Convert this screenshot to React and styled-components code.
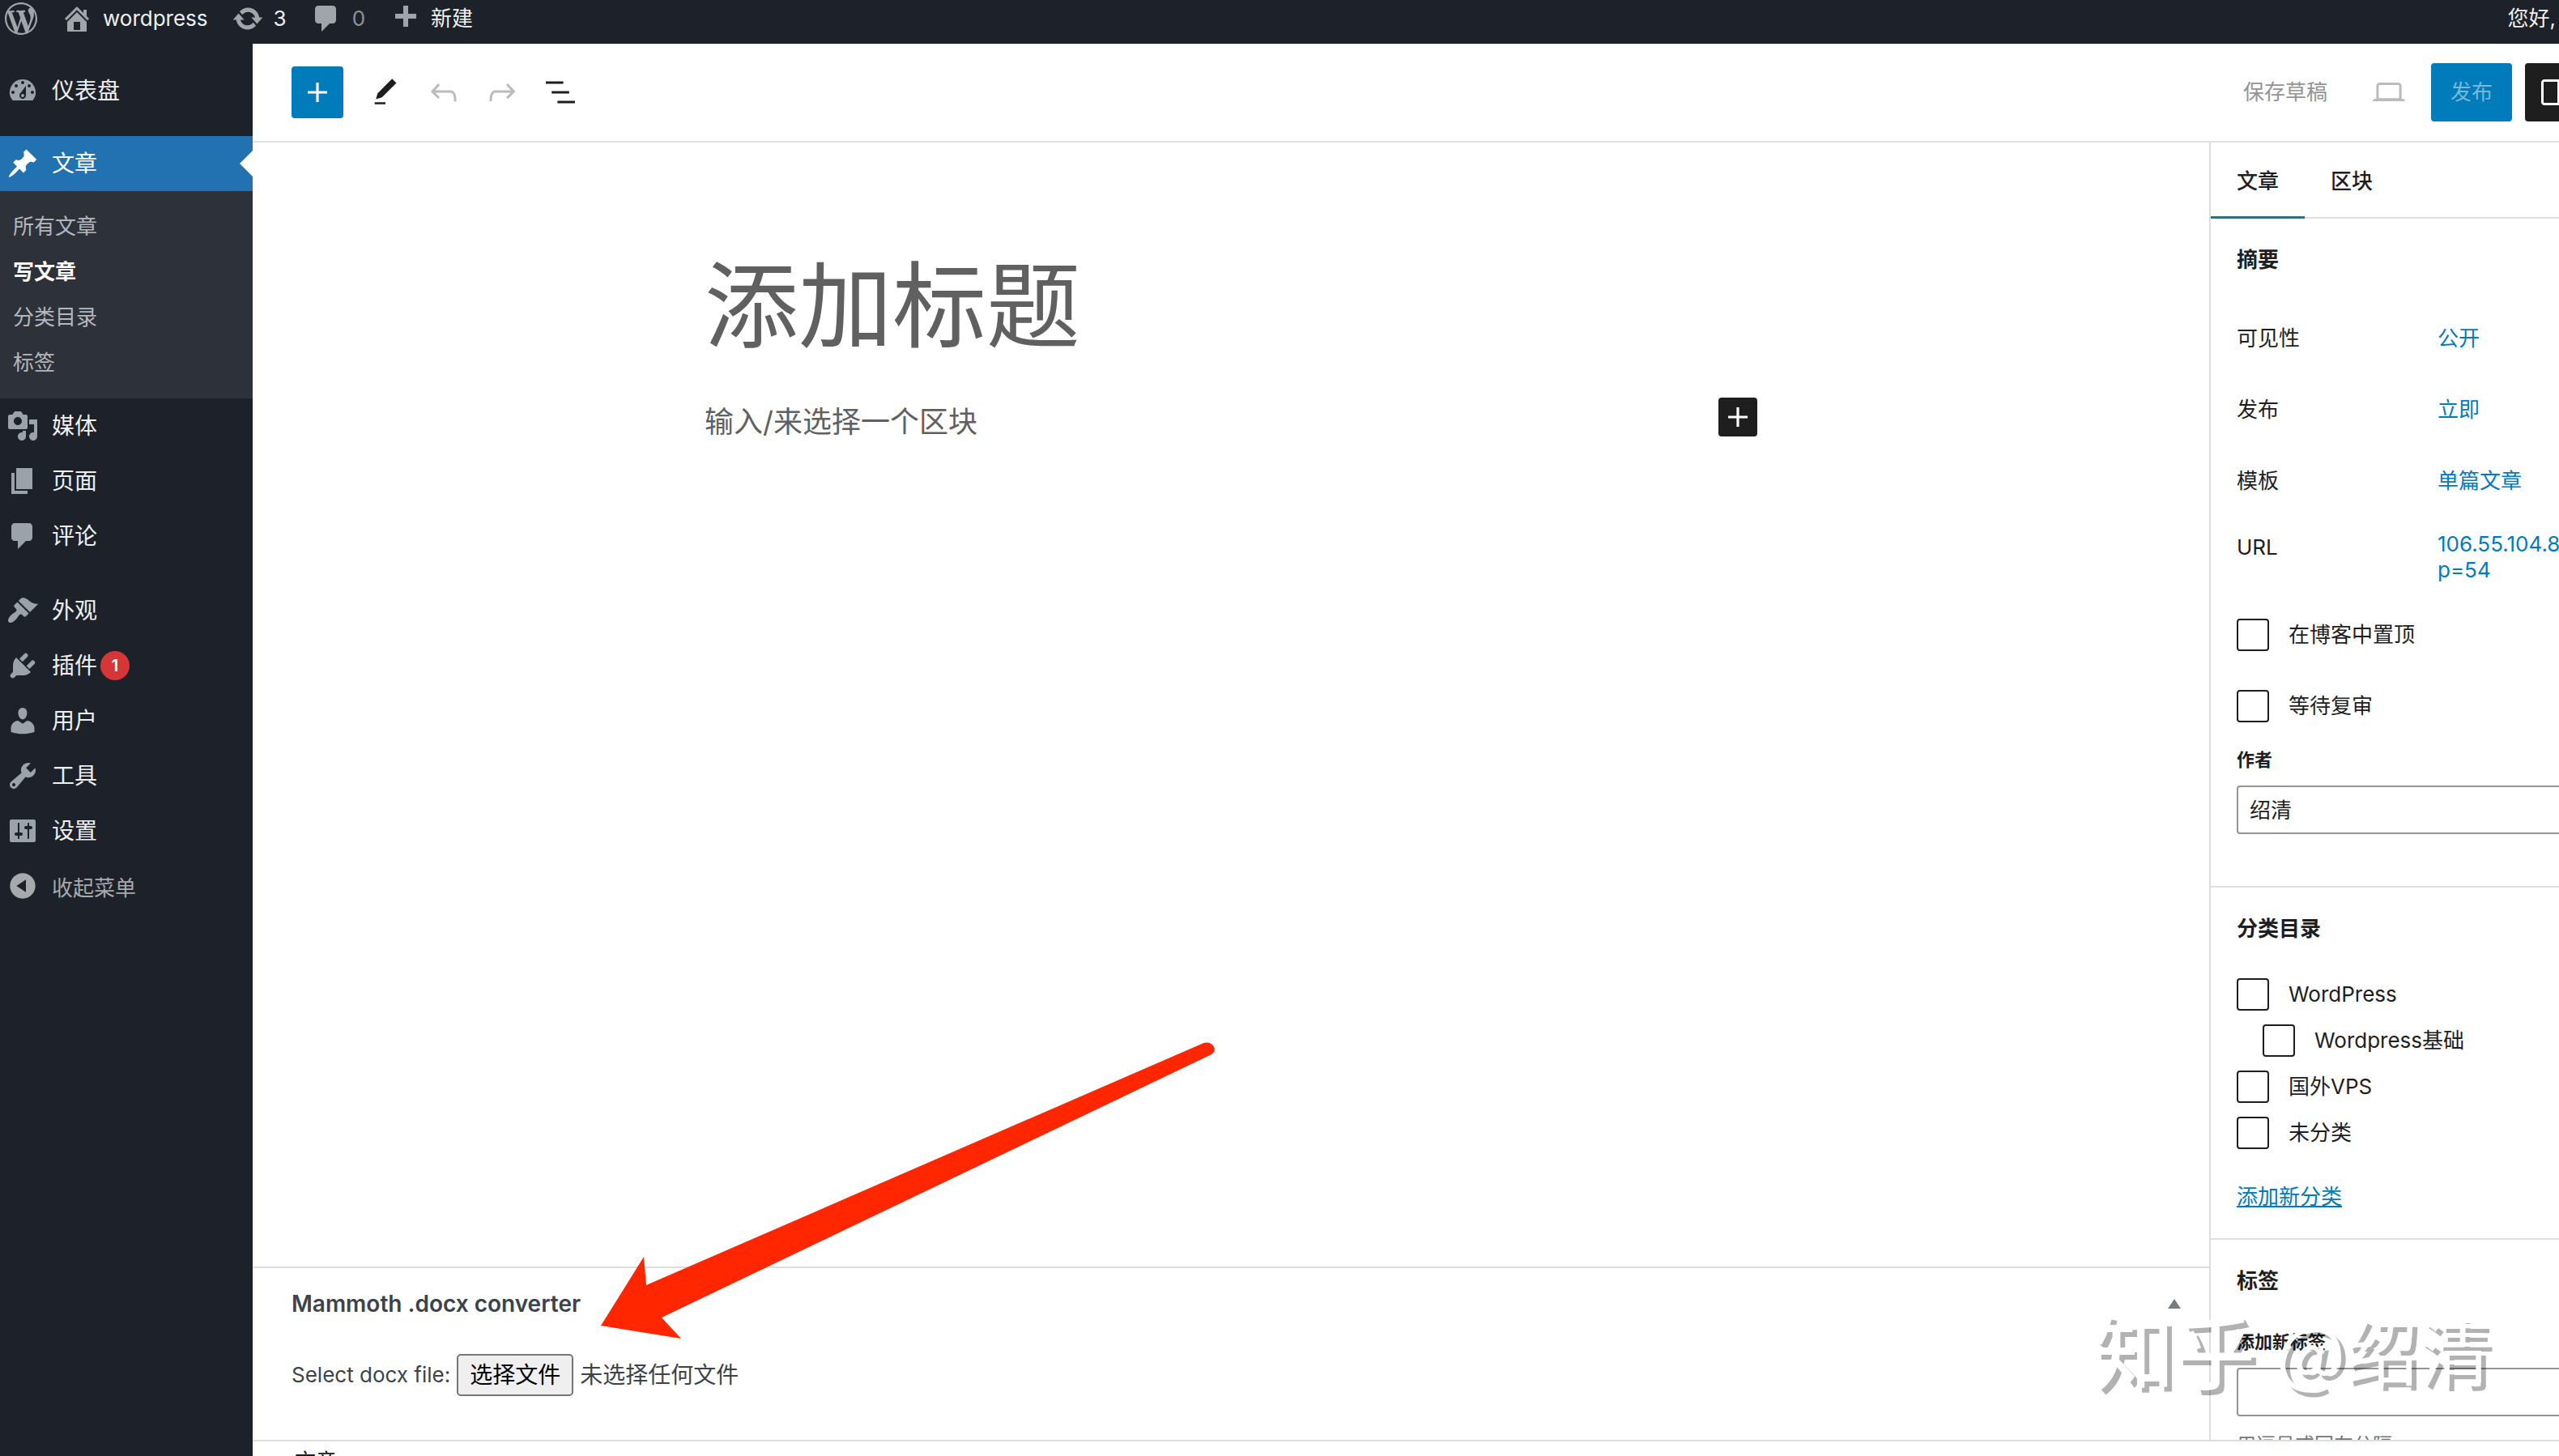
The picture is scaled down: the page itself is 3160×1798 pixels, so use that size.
import React from 'react';
import styled, { createGlobalStyle, css } from 'styled-components';

const GlobalStyle = createGlobalStyle`
    * {
        box-sizing: border-box;
    }
    body {
        margin: 0;
        overflow: hidden;
        background: #ffffff;
        color: #1e1e1e;
        font-family: Inter, "Noto Sans CJK SC", sans-serif;
        font-size: 26px;
    }
    h1, h2, h3, p, ul, dl, dd {
        margin: 0;
        padding: 0;
        font-weight: 400;
    }
    ul {
        list-style: none;
    }
    a {
        color: inherit;
        text-decoration: none;
    }
    button, input, select {
        margin: 0;
        font: inherit;
        color: inherit;
    }
    button {
        padding: 0;
        border: 0;
        background: none;
        cursor: pointer;
    }
`;

/* ---------- icons ---------- */

const dashicons = {
    wordpress: 'M20 10c0-5.51-4.49-10-10-10C4.48 0 0 4.49 0 10c0 5.52 4.48 10 10 10 5.51 0 10-4.48 10-10zM7.78 15.37L4.37 6.22c.55-.02 1.17-.08 1.17-.08.5-.06.44-1.13-.06-1.11 0 0-1.45.11-2.37.11-.18 0-.37 0-.58-.01C4.12 2.69 6.87 1.11 10 1.11c2.33 0 4.45.87 6.05 2.34-.68-.11-1.65.39-1.65 1.58 0 .74.45 1.36.9 2.1.35.61.55 1.36.55 2.46 0 1.49-1.4 5-1.4 5l-3.03-8.37c.54-.02.82-.17.82-.17.5-.05.44-1.25-.06-1.22 0 0-1.44.12-2.38.12-.87 0-2.33-.12-2.33-.12-.5-.03-.56 1.2-.06 1.22l.92.08 1.26 3.41zM17.41 10c.24-.64.74-1.87.43-4.25.7 1.29 1.05 2.71 1.05 4.25 0 3.29-1.73 6.24-4.4 7.78.97-2.59 1.94-5.2 2.92-7.78zM6.1 18.09C3.12 16.65 1.11 13.53 1.11 10c0-1.3.23-2.48.72-3.59C3.25 10.3 4.67 14.2 6.1 18.09zm4.03-6.63l2.58 6.98c-.86.29-1.76.45-2.71.45-.79 0-1.57-.11-2.29-.33.81-2.38 1.62-4.74 2.42-7.1z',
    home: 'M16 8.5l1.53 1.53-1.06 1.06L10 4.6l-6.47 6.49-1.06-1.06L10 2.5l4 4v-2h2v4zm-6-2.46l6 5.99V18H4v-5.97zM12 17v-5H8v5h4z',
    update: 'M10.2 3.28c3.53 0 6.43 2.61 6.92 6h2.08l-3.5 4-3.5-4h2.32c-.45-1.97-2.21-3.45-4.32-3.45-1.45 0-2.73.71-3.54 1.78L4.95 5.66C6.23 4.2 8.11 3.28 10.2 3.28zm-.4 13.44c-3.52 0-6.43-2.61-6.92-6H.8l3.5-4c1.17 1.33 2.33 2.67 3.5 4H5.48c.45 1.97 2.21 3.45 4.32 3.45 1.45 0 2.73-.71 3.54-1.78l1.71 1.95c-1.28 1.46-3.15 2.38-5.25 2.38z',
    comments: 'M5 2h9c1.1 0 2 .9 2 2v7c0 1.1-.9 2-2 2h-2l-5 5v-5H5c-1.1 0-2-.9-2-2V4c0-1.1.9-2 2-2z',
    plus: 'M17 7v3h-5v5H9v-5H4V7h5V2h3v5h5z',
    dashboard: 'M3.76 16h12.48A7.998 7.998 0 0 0 10 3a7.998 7.998 0 0 0-6.24 13zM10 4c.55 0 1 .45 1 1s-.45 1-1 1-1-.45-1-1 .45-1 1-1zM6 6c.55 0 1 .45 1 1s-.45 1-1 1-1-.45-1-1 .45-1 1-1zm8 0c.55 0 1 .45 1 1s-.45 1-1 1-1-.45-1-1 .45-1 1-1zm-5.37 5.55L12 7v6c0 1.1-.9 2-2 2s-2-.9-2-2c0-.57.24-1.08.63-1.45zM4 10c.55 0 1 .45 1 1s-.45 1-1 1-1-.45-1-1 .45-1 1-1zm12 0c.55 0 1 .45 1 1s-.45 1-1 1-1-.45-1-1 .45-1 1-1zm-5 3c0-.55-.45-1-1-1s-1 .45-1 1 .45 1 1 1 1-.45 1-1z',
    post: 'M10.44 3.02l1.82-1.82 6.36 6.35-1.83 1.82c-1.05-.68-2.48-.57-3.41.36l-.75.75c-.92.93-1.04 2.35-.35 3.41l-1.83 1.82-2.41-2.41-2.8 2.79c-.42.42-3.38 2.71-3.8 2.29s1.86-3.39 2.28-3.81l2.79-2.79L4.1 9.36l1.83-1.82c1.05.69 2.48.57 3.4-.36l.75-.75c.93-.92 1.05-2.35.36-3.41z',
    media: 'M13 11V4c0-.55-.45-1-1-1h-1.67L9 1H5L3.67 3H2c-.55 0-1 .45-1 1v7c0 .55.45 1 1 1h10c.55 0 1-.45 1-1zM7 4.5c1.38 0 2.5 1.12 2.5 2.5S8.38 9.5 7 9.5 4.5 8.38 4.5 7 5.62 4.5 7 4.5zM14 6h5v10.5c0 1.38-1.12 2.5-2.5 2.5S14 17.88 14 16.5s1.12-2.5 2.5-2.5c.17 0 .34.02.5.05V9h-3V6zm-4 8.05V13h2v3.5c0 1.38-1.12 2.5-2.5 2.5S7 17.88 7 16.5 8.12 14 9.5 14c.17 0 .34.02.5.05z',
    page: 'M6 15V2h10v13H6zm-1 1h8v2H3V5h2v11z',
    appearance: 'M14.48 11.06L7.41 3.99l1.5-1.5c.5-.56 2.3-.47 3.51.32 1.21.8 1.43 1.28 2.91 2.1 1.18.64 2.45 1.26 4.45.85zm-.71.71L6.7 4.7 4.93 6.47c-.39.39-.39 1.02 0 1.41l1.06 1.06c.39.39.39 1.03 0 1.42-.6.6-1.43 1.11-2.21 1.69-.35.26-.7.53-1.01.84C1.43 14.23.4 16.08 1.4 17.07c.99 1 2.84-.03 4.18-1.36.31-.31.58-.66.85-1.02.57-.78 1.08-1.61 1.69-2.21.39-.39 1.02-.39 1.41 0l1.06 1.06c.39.39 1.02.39 1.41 0z',
    plugins: 'M13.11 4.36L9.87 7.6 8 5.73l3.24-3.24c.35-.34 1.05-.2 1.56.32.52.51.66 1.21.31 1.55zm-8 1.77l.91-1.12 9.01 9.01-1.19.84c-.71.71-2.63 1.16-3.82 1.16H6.14L4.9 17.26c-.59.59-1.54.59-2.12 0-.59-.58-.59-1.53 0-2.12l1.24-1.24v-3.88c0-1.13.4-3.19 1.09-3.89zm7.26 3.97l3.24-3.24c.34-.35 1.04-.21 1.55.31.52.51.66 1.21.31 1.55l-3.24 3.25z',
    users: 'M10 9.25c-2.27 0-2.73-3.44-2.73-3.44C7 4.02 7.82 2 9.97 2c2.16 0 2.98 2.02 2.71 3.81 0 0-.41 3.44-2.68 3.44zm0 2.57L12.72 10c2.39 0 4.52 2.33 4.52 4.53v2.49s-3.65 1.13-7.24 1.13c-3.65 0-7.24-1.13-7.24-1.13v-2.49c0-2.25 1.94-4.48 4.47-4.48z',
    tools: 'M16.68 9.77c-1.34 1.34-3.3 1.67-4.95.99l-5.41 6.52c-.99.99-2.59.99-3.58 0s-.99-2.59 0-3.57l6.52-5.42c-.68-1.65-.35-3.61.99-4.95 1.28-1.28 3.12-1.62 4.72-1.06l-2.89 2.89 2.82 2.82 2.86-2.87c.53 1.58.18 3.39-1.08 4.65zM3.81 16.21c.4.39 1.04.39 1.43 0 .4-.4.4-1.04 0-1.43-.39-.4-1.03-.4-1.43 0-.39.39-.39 1.03 0 1.43z',
    settings: 'M18 16V4c0-.55-.45-1-1-1H3c-.55 0-1 .45-1 1v12c0 .55.45 1 1 1h14c.55 0 1-.45 1-1zM8 11h1c.55 0 1 .45 1 1s-.45 1-1 1H8v1.5c0 .28-.22.5-.5.5s-.5-.22-.5-.5V13H6c-.55 0-1-.45-1-1s.45-1 1-1h1V5.5c0-.28.22-.5.5-.5s.5.22.5.5V11zm5-2h-1c-.55 0-1-.45-1-1s.45-1 1-1h1V5.5c0-.28.22-.5.5-.5s.5.22.5.5V7h1c.55 0 1 .45 1 1s-.45 1-1 1h-1v5.5c0 .28-.22.5-.5.5s-.5-.22-.5-.5V9z',
    collapse: 'M10 2.16c4.33 0 7.84 3.51 7.84 7.84s-3.51 7.84-7.84 7.84S2.16 14.33 2.16 10 5.71 2.16 10 2.16zm2 11.72V6.12L6.18 9.97z'
};

const editorIcons = {
    plus: 'M18 11.2h-5.2V6h-1.6v5.2H6v1.6h5.2V18h1.6v-5.2H18z',
    edit: 'M20.1 5.1L16.9 2 6.2 12.7l-1.3 4.4 4.5-1.3L20.1 5.1zM4 20.8h8v-1.5H4v1.5z',
    undo: 'M18.3 11.7c-.6-.6-1.4-.9-2.3-.9H6.7l2.9-3.3-1.1-1-4.5 5L8.5 16l1-1-2.7-2.7H16c.5 0 .9.2 1.3.5 1 1 1 3.4 1 4.5v.3h1.5v-.2c0-1.5 0-4.3-1.5-5.7z',
    redo: 'M15.6 6.5l-1.1 1 2.9 3.3H8c-.9 0-1.7.3-2.3.9-1.4 1.5-1.4 4.2-1.4 5.6v.2h1.5v-.3c0-1.1 0-3.5 1-4.5.3-.3.7-.5 1.3-.5h9.2L14.5 15l1.1 1.1 4.6-4.6-4.6-5z',
    listView: 'M13.8 5.2H3v1.5h10.8V5.2zm-3.6 12v1.5H21v-1.5H10.2zm7.2-6H6.6v1.5h10.8v-1.5z',
    desktop: 'M20.5 16h-.7V8c0-1.1-.9-2-2-2H6.2c-1.1 0-2 .9-2 2v8h-.7c-.8 0-1.5.7-1.5 1.5h20c0-.8-.7-1.5-1.5-1.5zM5.7 8c0-.3.2-.5.5-.5h11.6c.3 0 .5.2.5.5v7.6H5.7V8z',
    drawer: 'M18 4H6c-1.1 0-2 .9-2 2v12c0 1.1.9 2 2 2h12c1.1 0 2-.9 2-2V6c0-1.1-.9-2-2-2zm-4 14.5H6c-.3 0-.5-.2-.5-.5V6c0-.3.2-.5.5-.5h8v13zm4.5-.5c0 .3-.2.5-.5.5h-2.5v-13H18c.3 0 .5.2.5.5v12z'
};

const Svg = styled.svg`
    flex: none;
    width: ${props => props.$size}px;
    height: ${props => props.$size}px;
    fill: currentColor;
`;

const Dashicon = ({ name }) => (
    <Svg $size={40} viewBox="0 0 20 20" aria-hidden="true"><path d={dashicons[name]}/></Svg>
);

const EditorIcon = ({ name, size = 48 }) => (
    <Svg $size={size} viewBox="0 0 24 24" aria-hidden="true"><path d={editorIcons[name]}/></Svg>
);

/* ---------- page frame ---------- */

const Page = styled.div`
    position: relative;
    display: flex;
    flex-direction: column;
    height: 100vh;
    overflow: hidden;
`;

const Body = styled.div`
    display: flex;
    flex: 1;
    min-height: 0;
`;

/* ---------- admin bar ---------- */

const AdminBar = styled.header`
    display: flex;
    align-items: center;
    flex: none;
    gap: 29px;
    height: 54px;
    padding: 0 4px 9px 6px;
    background: #1d2129;
    color: #f0f0f1;
`;

const BarLink = styled.a`
    display: flex;
    align-items: center;
    gap: 12px;
    line-height: 44px;
    margin-left: ${props => (props.$end ? 'auto' : '0')};

    svg {
        color: #a0a5aa;
    }
`;

const Muted = styled.span`
    color: #8c9196;
`;

/* ---------- admin menu ---------- */

const Menu = styled.nav`
    flex: none;
    width: 312px;
    padding-top: 24px;
    background: #1d2129;
    color: #f0f0f1;
`;

const MenuLink = styled.a`
    position: relative;
    display: flex;
    align-items: center;
    gap: 16px;
    height: 68px;
    padding-left: 8px;
    font-size: 28px;
    line-height: 36px;

    svg {
        color: #9ca2a9;
    }

    ${props => props.$current && css`
        background: #2271b1;
        color: #ffffff;

        svg {
            color: #ffffff;
        }

        &::after {
            content: "";
            position: absolute;
            top: 18px;
            right: 0;
            border: 16px solid transparent;
            border-left: 0;
            border-right-color: #ffffff;
        }
    `}
`;

const Badge = styled.span`
    display: flex;
    align-items: center;
    justify-content: center;
    width: 36px;
    height: 36px;
    margin-left: -12px;
    border-radius: 50%;
    background: #d63638;
    color: #ffffff;
    font-size: 20px;
    font-weight: 600;
`;

const Separator = styled.li`
    height: ${props => props.$height}px;
`;

const SubMenu = styled.ul`
    padding: 16px;
    background: #2d313a;
`;

const SubLink = styled.a`
    display: block;
    line-height: 56px;
    color: ${props => (props.$current ? '#ffffff' : '#b4b7bd')};
    font-weight: ${props => (props.$current ? 700 : 400)};
`;

const CollapseButton = styled.button`
    display: flex;
    align-items: center;
    gap: 16px;
    height: 68px;
    padding-left: 8px;
    color: #a7aaad;
`;

/* ---------- editor ---------- */

/* the editor is wider than the window, its right edge is scrolled out of view */
const Editor = styled.div`
    display: flex;
    flex: 1;
    flex-direction: column;
    min-width: 0;
    margin-right: -128px;
`;

const EditorHeader = styled.div`
    display: flex;
    align-items: center;
    justify-content: space-between;
    flex: none;
    height: 122px;
    padding: 0 98px 0 48px;
    border-bottom: 2px solid #e0e0e0;
`;

const Tools = styled.div`
    display: flex;
    align-items: center;
    gap: ${props => props.$gap}px;
`;

const ToolButton = styled.button`
    display: flex;
    align-items: center;
    justify-content: center;
    width: 64px;
    height: 64px;
    border-radius: 4px;
    color: ${props => (props.disabled ? '#bbbbbb' : '#1e1e1e')};
`;

const InserterButton = styled(ToolButton)`
    margin-right: 12px;
    background: #007cba;
    color: #ffffff;
`;

const HeaderButton = styled(ToolButton)`
    width: 72px;
    height: 72px;
    ${props => props.$pressed && css`
        background: #1e1e1e;
        color: #ffffff;
    `}
`;

const SaveButton = styled.button`
    padding: 0 24px;
    line-height: 72px;
    color: #949494;
`;

const PublishButton = styled.button`
    padding: 0 24px;
    border-radius: 4px;
    background: #007cba;
    color: #78b9db;
    line-height: 72px;
`;

const Workspace = styled.div`
    display: grid;
    grid-template-columns: 1fr 560px;
    flex: 1;
    min-height: 0;
`;

const Content = styled.main`
    display: flex;
    flex-direction: column;
    min-width: 0;
`;

const Canvas = styled.div`
    flex: 1;
    width: 100%;
    max-width: 1300px;
    margin: 0 auto;
    padding-top: 132px;
    color: #606060;
`;

const PostTitle = styled.h1`
    font-size: 116px;
    line-height: 140px;
`;

const EmptyBlock = styled.div`
    display: flex;
    align-items: flex-start;
    justify-content: space-between;
    margin-top: 43px;
    font-size: 36px;
    line-height: 60px;
`;

const BlockInserter = styled(ToolButton)`
    width: 48px;
    height: 48px;
    background: #1e1e1e;
    color: #ffffff;
`;

const MetaBox = styled.section`
    padding: 24px 35px 54px 48px;
    border-top: 2px solid #dddddd;
    color: #3c434a;
`;

const MetaBoxHead = styled.div`
    display: flex;
    align-items: center;
    justify-content: space-between;
`;

const MetaBoxTitle = styled.h2`
    font-size: 28px;
    font-weight: 600;
    line-height: 40px;
`;

const ToggleButton = styled.button`
    border: 8px solid transparent;
    border-top: 0;
    border-bottom: 12px solid #787c82;
`;

const FileRow = styled.div`
    display: flex;
    align-items: center;
    gap: 8px;
    margin-top: 42px;
    line-height: 36px;
`;

const FileName = styled.span`
    font-size: 28px;
`;

const FileButton = styled.label`
    padding: 0 14px;
    border: 2px solid #767676;
    border-radius: 5px;
    background: #efefef;
    color: #000000;
    font-size: 28px;
    line-height: 48px;
`;

const HiddenFile = styled.input`
    position: absolute;
    width: 1px;
    height: 1px;
    opacity: 0;
`;

/* ---------- settings sidebar ---------- */

const Settings = styled.aside`
    border-left: 2px solid #dddddd;
    overflow: hidden;
`;

const Tabs = styled.div`
    display: flex;
    height: 94px;
    border-bottom: 2px solid #dddddd;
`;

const Tab = styled.button`
    height: 94px;
    padding: 0 32px;
    border-bottom: 3px solid ${props => (props['aria-selected'] ? '#0a7ba6' : 'transparent')};
    font-weight: 500;
`;

const Panel = styled.section`
    padding: 32px;
    padding-bottom: ${props => (props.$last ? 64 : 32)}px;
    border-bottom: 2px solid #e0e0e0;
`;

const PanelTitle = styled.h2`
    margin-bottom: 42px;
    font-size: 26px;
    font-weight: 600;
    line-height: 38px;
`;

const Rows = styled.div`
    display: flex;
    flex-direction: column;
    gap: 16px;
`;

const SummaryRow = styled.div`
    display: grid;
    grid-template-columns: 248px 1fr;
    align-items: center;
    min-height: 72px;
    line-height: 32px;
`;

const UrlRow = styled(SummaryRow)`
    align-items: start;
    padding: 10px 0 12px;
    line-height: 40px;
`;

const ValueButton = styled.button`
    justify-self: start;
    color: #007cba;
    line-height: 32px;
    text-align: left;
    white-space: pre-line;
`;

const CheckLabel = styled.label`
    display: flex;
    align-items: center;
    gap: 24px;
    min-height: ${props => props.$height}px;
    margin-left: ${props => (props.$child ? 32 : 0)}px;
    line-height: 40px;
`;

const Checkbox = styled.input`
    flex: none;
    width: 40px;
    height: 40px;
    border: 2px solid #1e1e1e;
    border-radius: 4px;
    appearance: none;
`;

const CategoryList = styled.div`
    display: flex;
    flex-direction: column;
    gap: 17px;
`;

const FieldLabel = styled.label`
    display: block;
    margin-bottom: 18px;
    font-size: 22px;
    font-weight: 600;
    line-height: 28px;
`;

const fieldBox = css`
    display: block;
    width: 100%;
    height: 60px;
    padding: 0 14px;
    border: 2px solid #949494;
    border-radius: 4px;
    background: #ffffff;
    appearance: none;
`;

const Select = styled.select`
    ${fieldBox}
`;

const TagInput = styled.input`
    ${fieldBox}
`;

const Hint = styled.p`
    margin-top: 18px;
    color: #757575;
    font-size: 24px;
    line-height: 36px;
`;

const AddLink = styled.a`
    display: inline-block;
    margin-top: 40px;
    color: #007cba;
    line-height: 38px;
    text-decoration: underline;
`;

const Footer = styled.footer`
    flex: none;
    height: 20px;
    padding-left: 52px;
    border-top: 2px solid #dddddd;
    line-height: 50px;
    overflow: hidden;
`;

/* ---------- overlays ---------- */

const Arrow = styled.svg`
    position: absolute;
    left: 740px;
    bottom: 143px;
    width: 762px;
    height: 370px;
    fill: #ff2600;
    pointer-events: none;
`;

const Watermark = styled.div`
    position: absolute;
    right: 84px;
    bottom: 68px;
    display: flex;
    align-items: center;
    gap: 26px;
    color: #ffffff;
    font-family: "Noto Sans CJK SC", sans-serif;
    font-size: 90px;
    line-height: 130px;
    text-shadow: 6px 6px 0 rgba(0, 0, 0, 0.3);
    pointer-events: none;
`;

const WatermarkLogo = styled.span`
    font-size: 100px;
    font-weight: 500;
`;

const topItems = [
    { icon: 'media', label: '媒体' },
    { icon: 'page', label: '页面' },
    { icon: 'comments', label: '评论' }
];

const bottomItems = [
    { icon: 'appearance', label: '外观' },
    { icon: 'plugins', label: '插件', count: 1 },
    { icon: 'users', label: '用户' },
    { icon: 'tools', label: '工具' },
    { icon: 'settings', label: '设置' }
];

const subItems = ['所有文章', '写文章', '分类目录', '标签'];

const summary = [
    ['可见性', '公开'],
    ['发布', '立即'],
    ['模板', '单篇文章']
];

const categories = [
    { label: 'WordPress' },
    { label: 'Wordpress基础', child: true },
    { label: '国外VPS' },
    { label: '未分类' }
];

const MenuItem = ({ icon, label, count, current, children }) => (
    <li>
        <MenuLink href="#" $current={current}>
            <Dashicon name={icon}/>
            {label}
            {count && <Badge>{count}</Badge>}
        </MenuLink>
        {children}
    </li>
);

const AdminMenu = () => (
    <Menu>
        <ul>
            <MenuItem icon="dashboard" label="仪表盘"/>
            <Separator $height={22}/>
            <MenuItem icon="post" label="文章" current>
                <SubMenu>
                    {subItems.map(item => (
                        <li key={item}><SubLink href="#" $current={item === '写文章'}>{item}</SubLink></li>
                    ))}
                </SubMenu>
            </MenuItem>
            {topItems.map(item => <MenuItem key={item.label} {...item}/>)}
            <Separator $height={24}/>
            {bottomItems.map(item => <MenuItem key={item.label} {...item}/>)}
            <li>
                <CollapseButton type="button"><Dashicon name="collapse"/>收起菜单</CollapseButton>
            </li>
        </ul>
    </Menu>
);

const SettingsSidebar = () => (
    <Settings>
        <Tabs role="tablist">
            <Tab type="button" role="tab" aria-selected={true}>文章</Tab>
            <Tab type="button" role="tab" aria-selected={false}>区块</Tab>
        </Tabs>
        <Panel $last>
            <PanelTitle>摘要</PanelTitle>
            <Rows>
                {summary.map(([label, value]) => (
                    <SummaryRow key={label}>
                        <span>{label}</span>
                        <ValueButton type="button">{value}</ValueButton>
                    </SummaryRow>
                ))}
                <UrlRow>
                    <span>URL</span>
                    <ValueButton type="button">{'106.55.104.8\np=54'}</ValueButton>
                </UrlRow>
                <CheckLabel $height={72}><Checkbox type="checkbox"/>在博客中置顶</CheckLabel>
                <CheckLabel $height={72}><Checkbox type="checkbox"/>等待复审</CheckLabel>
                <div>
                    <FieldLabel htmlFor="author">作者</FieldLabel>
                    <Select id="author"><option>绍清</option></Select>
                </div>
            </Rows>
        </Panel>
        <Panel>
            <PanelTitle>分类目录</PanelTitle>
            <CategoryList>
                {categories.map(({ label, child }) => (
                    <CheckLabel key={label} $height={40} $child={child}>
                        <Checkbox type="checkbox"/>{label}
                    </CheckLabel>
                ))}
            </CategoryList>
            <AddLink href="#">添加新分类</AddLink>
        </Panel>
        <Panel>
            <PanelTitle>标签</PanelTitle>
            <FieldLabel htmlFor="tags">添加新标签</FieldLabel>
            <TagInput id="tags" type="text"/>
            <Hint>用逗号或回车分隔</Hint>
        </Panel>
    </Settings>
);

const App = () => (
    <Page>
        <GlobalStyle/>
        <AdminBar>
            <BarLink href="#" aria-label="WordPress"><Dashicon name="wordpress"/></BarLink>
            <BarLink href="#"><Dashicon name="home"/>wordpress</BarLink>
            <BarLink href="#"><Dashicon name="update"/>3</BarLink>
            <BarLink href="#"><Dashicon name="comments"/><Muted>0</Muted></BarLink>
            <BarLink href="#"><Dashicon name="plus"/>新建</BarLink>
            <BarLink href="#" $end>您好,</BarLink>
        </AdminBar>
        <Body>
            <AdminMenu/>
            <Editor>
                <EditorHeader>
                    <Tools $gap={8}>
                        <InserterButton type="button" aria-label="切换区块插入器"><EditorIcon name="plus"/></InserterButton>
                        <ToolButton type="button" aria-label="工具"><EditorIcon name="edit" size={40}/></ToolButton>
                        <ToolButton type="button" aria-label="撤销" disabled><EditorIcon name="undo"/></ToolButton>
                        <ToolButton type="button" aria-label="重做" disabled><EditorIcon name="redo"/></ToolButton>
                        <ToolButton type="button" aria-label="列表视图"><EditorIcon name="listView"/></ToolButton>
                    </Tools>
                    <Tools $gap={16}>
                        <SaveButton type="button">保存草稿</SaveButton>
                        <HeaderButton type="button" aria-label="预览" disabled><EditorIcon name="desktop"/></HeaderButton>
                        <PublishButton type="button">发布</PublishButton>
                        <HeaderButton type="button" aria-label="设置" $pressed><EditorIcon name="drawer"/></HeaderButton>
                    </Tools>
                </EditorHeader>
                <Workspace>
                    <Content>
                        <Canvas>
                            <PostTitle>添加标题</PostTitle>
                            <EmptyBlock>
                                <p>输入/来选择一个区块</p>
                                <BlockInserter type="button" aria-label="添加区块"><EditorIcon name="plus"/></BlockInserter>
                            </EmptyBlock>
                        </Canvas>
                        <MetaBox>
                            <MetaBoxHead>
                                <MetaBoxTitle>Mammoth .docx converter</MetaBoxTitle>
                                <ToggleButton type="button" aria-label="切换面板"/>
                            </MetaBoxHead>
                            <FileRow>
                                <span>Select docx file:</span>
                                <FileButton htmlFor="docx">选择文件</FileButton>
                                <HiddenFile id="docx" type="file"/>
                                <FileName>未选择任何文件</FileName>
                            </FileRow>
                        </MetaBox>
                    </Content>
                    <SettingsSidebar/>
                </Workspace>
                <Footer>文章</Footer>
            </Editor>
        </Body>
        <Arrow viewBox="0 0 762 370" aria-hidden="true">
            <path d="M2 352L55 267L58 302L744 4C750 1 757 3 759 8C761 12 759 16 754 18L77 342L101 368Z"/>
        </Arrow>
        <Watermark>
            <WatermarkLogo>知乎</WatermarkLogo>
            <span>@绍清</span>
        </Watermark>
    </Page>
);

export default App;
